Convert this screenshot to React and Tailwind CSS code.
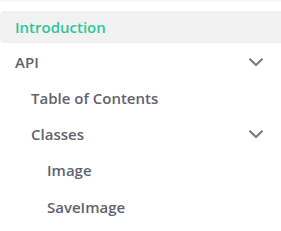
import React from "react";

function Chevron() {
  return (
    <svg width="14" height="9" viewBox="0 0 14 9" className="text-[#7a7a7a]">
      <path d="M1.2 1.5 L7 7 L12.8 1.5" fill="none" stroke="currentColor" strokeWidth="2.1" strokeLinecap="square" />
    </svg>
  );
}

function Row({ label, indent, chevron }) {
  return (
    <div className={`flex h-[36.2px] items-center justify-between pr-[18px] ${indent}`}>
      <span>{label}</span>
      {chevron && <Chevron />}
    </div>
  );
}

export default function App() {
  return (
    <div className="w-[281px] h-[231px] bg-white overflow-hidden text-[15px] font-semibold text-[#5e636e]" style={{ fontFamily: '"Open Sans", sans-serif' }}>
      <div className="h-[2px] bg-[#f8f8f8]" />
      <div className="mt-[9px] flex h-[32px] items-center rounded-l-[4px] bg-[#f1f1f1] pl-[15px] text-[#2fc59a]">
        Introduction
      </div>
      <div className="mt-[1px]">
        <Row label="API" indent="pl-[15px]" chevron />
        <Row label="Table of Contents" indent="pl-[31px]" />
        <Row label="Classes" indent="pl-[31px]" chevron />
        <Row label="Image" indent="pl-[47px]" />
        <Row label="SaveImage" indent="pl-[47px]" />
      </div>
    </div>
  );
}
